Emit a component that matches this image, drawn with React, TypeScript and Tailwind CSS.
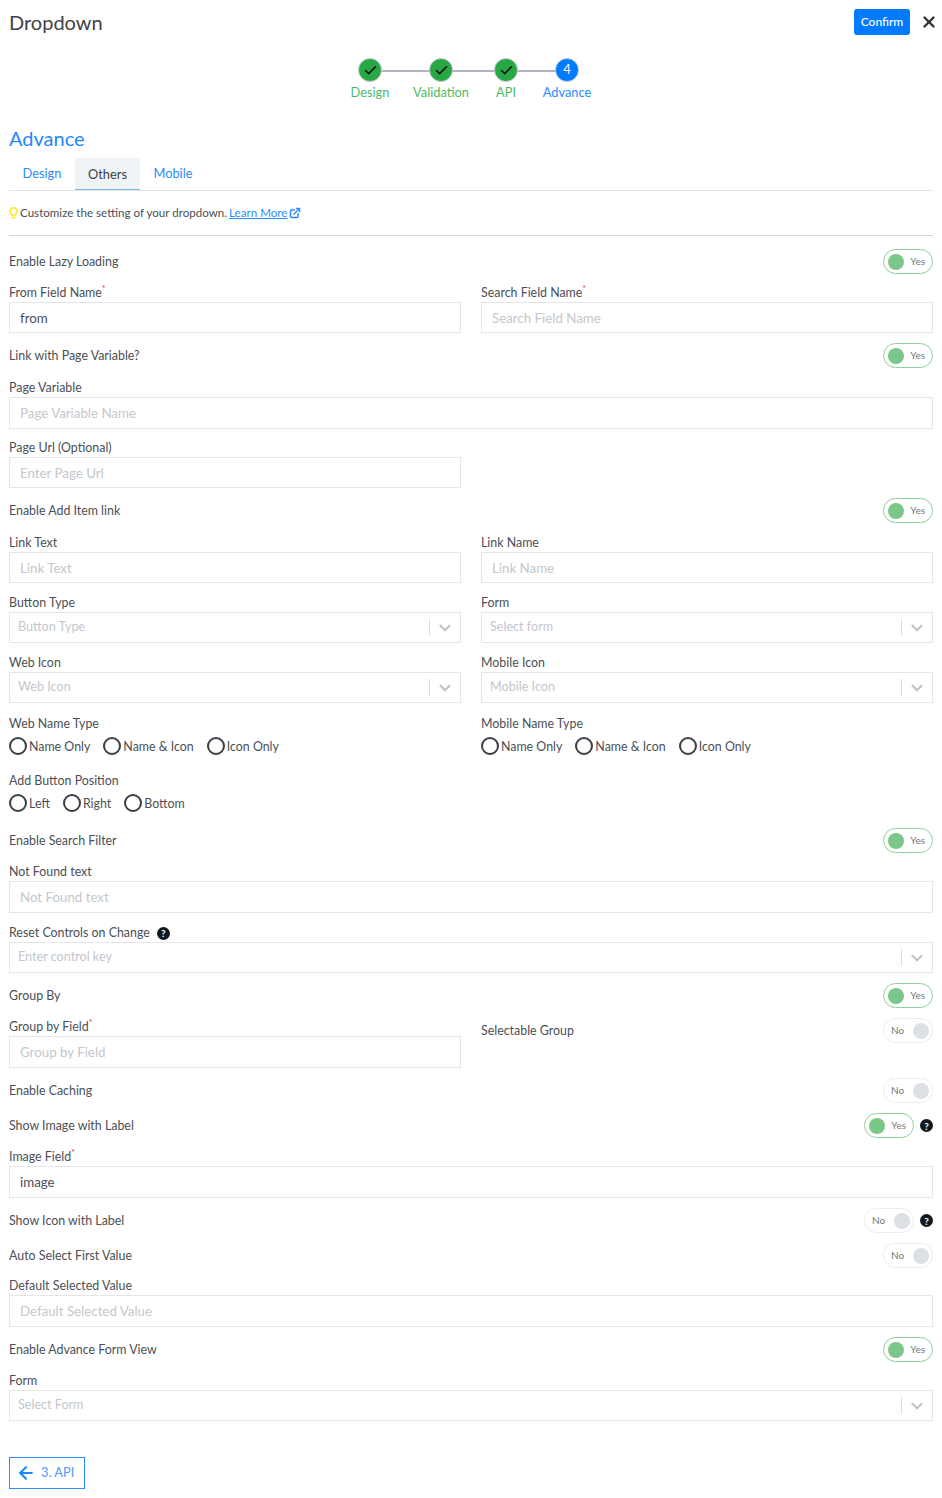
import React from 'react';
import { ArrowLeft, Check, ChevronDown, ExternalLink, X } from 'lucide-react';

const Help = () => (
  <span className="flex h-[13px] w-[13px] items-center justify-center rounded-full bg-[#101820] text-[10px] font-bold leading-none text-white">
    ?
  </span>
);

const Bulb = () => (
  <svg viewBox="0 0 12 16" className="h-[12px] w-[9px] text-[#f7e81d]" fill="none" stroke="currentColor">
    <path d="M6 1a4.7 4.7 0 0 0-2.7 8.5c.6.5.9 1 .9 1.7h3.6c0-.7.3-1.2.9-1.7A4.7 4.7 0 0 0 6 1z" strokeWidth="1.9" />
    <path d="M4 14.2h4" strokeWidth="2.4" />
  </svg>
);

const Toggle = ({ on = false }: { on?: boolean }) =>
  on ? (
    <div className="flex h-[25px] w-[50px] items-center justify-between rounded-full border border-[#8fd09c] bg-white pl-[4px] pr-[7px]">
      <span className="h-[16px] w-[16px] rounded-full bg-[#7bc787]" />
      <span className="text-[10px] text-[#777]">Yes</span>
    </div>
  ) : (
    <div className="flex h-[25px] w-[50px] items-center justify-between rounded-full border border-[#ececec] bg-white pl-[7px] pr-[3px]">
      <span className="text-[10px] text-[#777]">No</span>
      <span className="h-[16px] w-[16px] rounded-full bg-[#dcdfe4]" />
    </div>
  );

const ToggleRow = ({
  label,
  on,
  help,
  className = '',
}: {
  label: string;
  on?: boolean;
  help?: boolean;
  className?: string;
}) => (
  <div className={`flex h-[25px] items-center justify-between ${className}`}>
    <span className="mt-[2px] text-[12.4px] text-[#4b4f56]">{label}</span>
    <div className="flex items-center gap-[6px]">
      <Toggle on={on} />
      {help && <Help />}
    </div>
  </div>
);

const Label = ({ text, required }: { text: string; required?: boolean }) => (
  <div className="flex h-[18px] items-center pt-[1px] text-[12.4px] text-[#4b4f56]">
    {text}
    {required && <span className="relative -top-[5px] text-[9px] leading-none text-[#e53935]">*</span>}
  </div>
);

const TextField = ({
  label,
  placeholder,
  value,
  required,
  className = '',
  inputClass = 'h-[32px]',
}: {
  label: string;
  placeholder?: string;
  value?: string;
  required?: boolean;
  className?: string;
  inputClass?: string;
}) => (
  <div className={className}>
    <Label text={label} required={required} />
    <input
      readOnly
      value={value ?? ''}
      placeholder={placeholder}
      className={`block w-full border border-[#e6e6e6] bg-white px-[10px] text-[13.3px] text-[#4b4f56] outline-none placeholder:text-[#c4c7cc] ${inputClass}`}
    />
  </div>
);

const SelectBox = ({ placeholder }: { placeholder: string }) => (
  <div className="flex h-[31px] items-center border border-[#e6e6e6] bg-white pl-[8px] text-[12.6px] text-[#c4c7cc]">
    <span className="flex-1">{placeholder}</span>
    <span className="h-[17px] w-px bg-[#dedede]" />
    <span className="flex w-[30px] justify-center">
      <ChevronDown className="h-[18px] w-[18px] text-[#c4c4c4]" strokeWidth={3} />
    </span>
  </div>
);

const SelectField = ({
  label,
  placeholder,
  help,
  className = '',
}: {
  label: string;
  placeholder: string;
  help?: boolean;
  className?: string;
}) => (
  <div className={className}>
    <div className="flex h-[19px] items-center gap-[7px] pt-[1px] text-[12.4px] text-[#4b4f56]">
      {label}
      {help && <Help />}
    </div>
    <SelectBox placeholder={placeholder} />
  </div>
);

const Radios = ({ items }: { items: string[] }) => (
  <div className="mt-[3px] flex h-[20px] items-center gap-[13px]">
    {items.map((item) => (
      <label key={item} className="flex items-center gap-[2px] text-[12.4px] text-[#4b4f56]">
        <span className="h-[18px] w-[18px] rounded-full border-2 border-[#3a3f47]" />
        <span className="mt-[2px]">{item}</span>
      </label>
    ))}
  </div>
);

const steps = [
  { name: 'Design', width: 'w-[64px]', line: 'w-[71px]', done: true },
  { name: 'Validation', width: 'w-[78px]', line: 'w-[65px]', done: true },
  { name: 'API', width: 'w-[52px]', line: 'w-[61px]', done: true },
  { name: 'Advance', width: 'w-[70px] mr-[2px]', line: '', done: false },
];

const Stepper = () => (
  <div className="mt-[14px] flex justify-center">
    {steps.map((s) => (
      <div key={s.name} className={`relative flex flex-col items-center ${s.width}`}>
        {s.line && <span className={`absolute left-1/2 top-[12px] h-[2px] bg-[#b0b3c0] ${s.line}`} />}
        <span
          className={`relative z-10 flex h-[24px] w-[24px] items-center justify-center rounded-full border border-[#c9ccd4] text-[13px] text-white ${
            s.done ? 'bg-[#28a745]' : 'bg-[#007bff]'
          }`}
        >
          {s.done ? <Check className="h-[15px] w-[15px] text-[#111]" strokeWidth={2.5} /> : '4'}
        </span>
        <span className={`mt-[1px] text-[12.8px] leading-[18px] ${s.done ? 'text-[#4cbb66]' : 'text-[#2b8cff]'}`}>
          {s.name}
        </span>
      </div>
    ))}
  </div>
);

export default function App() {
  return (
    <div className="min-h-[1498px] bg-white px-[9px] pb-[9px] font-['Lato',sans-serif] text-[#4b4f56]">
      <header className="flex h-[44px] items-center justify-between">
        <h1 className="text-[20px] text-[#3f4246]">Dropdown</h1>
        <div className="flex items-center gap-[10px]">
          <button className="h-[26px] w-[56px] rounded-[3px] bg-[#007bff] text-[12px] font-medium text-white">
            Confirm
          </button>
          <X className="-mr-[5px] h-[18px] w-[18px] text-[#333]" strokeWidth={3.2} />
        </div>
      </header>

      <Stepper />

      <h2 className="mt-[23px] h-[29px] text-[20px] leading-[29px] text-[#1f87ff]">Advance</h2>

      <nav className="mt-[5px] flex h-[33px] border-b border-[#e3e3e3] text-[12.8px] text-[#2b8cff]">
        <span className="flex w-[66px] items-center justify-center">Design</span>
        <span className="flex w-[65px] items-center justify-center border-b border-[#7ab5f8] bg-[#f1f4f7] pt-[2px] text-[#3a3f47]">
          Others
        </span>
        <span className="flex w-[66px] items-center justify-center">Mobile</span>
      </nav>

      <div className="flex h-[45px] items-center gap-[2px] border-b border-[#d4d4d4] text-[11.6px]">
        <Bulb />
        <span>Customize the setting of your dropdown.</span>
        <a className="flex items-center gap-[2px] text-[#2b8cff]">
          <span className="underline">Learn More</span>
          <ExternalLink className="h-[12px] w-[12px]" strokeWidth={3} />
        </a>
      </div>

      <ToggleRow label="Enable Lazy Loading" on className="mt-[13px]" />

      <div className="mt-[10px] grid grid-cols-2 gap-x-[20px]">
        <TextField label="From Field Name" value="from" required inputClass="h-[31px]" />
        <TextField label="Search Field Name" placeholder="Search Field Name" required inputClass="h-[31px]" />
      </div>

      <ToggleRow label="Link with Page Variable?" on className="mt-[10px]" />
      <TextField label="Page Variable" placeholder="Page Variable Name" className="mt-[11px]" />

      <div className="mt-[10px] grid grid-cols-2 gap-x-[20px]">
        <TextField label="Page Url (Optional)" placeholder="Enter Page Url" inputClass="h-[31px]" />
      </div>

      <ToggleRow label="Enable Add Item link" on className="mt-[10px]" />

      <div className="mt-[11px] grid grid-cols-2 gap-x-[20px]">
        <TextField label="Link Text" placeholder="Link Text" inputClass="h-[31px]" />
        <TextField label="Link Name" placeholder="Link Name" inputClass="h-[31px]" />
      </div>

      <div className="mt-[10px] grid grid-cols-2 gap-x-[20px]">
        <SelectField label="Button Type" placeholder="Button Type" />
        <SelectField label="Form" placeholder="Select form" />
      </div>

      <div className="mt-[10px] grid grid-cols-2 gap-x-[20px]">
        <SelectField label="Web Icon" placeholder="Web Icon" />
        <SelectField label="Mobile Icon" placeholder="Mobile Icon" />
      </div>

      <div className="mt-[12px] grid grid-cols-2 gap-x-[20px]">
        <div>
          <Label text="Web Name Type" />
          <Radios items={['Name Only', 'Name & Icon', 'Icon Only']} />
        </div>
        <div>
          <Label text="Mobile Name Type" />
          <Radios items={['Name Only', 'Name & Icon', 'Icon Only']} />
        </div>
      </div>

      <div className="mt-[16px]">
        <Label text="Add Button Position" />
        <Radios items={['Left', 'Right', 'Bottom']} />
      </div>

      <ToggleRow label="Enable Search Filter" on className="mt-[15px]" />
      <TextField label="Not Found text" placeholder="Not Found text" className="mt-[10px]" />
      <SelectField label="Reset Controls on Change" placeholder="Enter control key" help className="mt-[10px]" />
      <ToggleRow label="Group By" on className="mt-[10px]" />

      <div className="mt-[10px] grid grid-cols-2 gap-x-[20px]">
        <TextField label="Group by Field" placeholder="Group by Field" required />
        <ToggleRow label="Selectable Group" />
      </div>

      <ToggleRow label="Enable Caching" className="mt-[10px]" />
      <ToggleRow label="Show Image with Label" on help className="mt-[10px]" />
      <TextField label="Image Field" value="image" required className="mt-[10px]" />
      <ToggleRow label="Show Icon with Label" help className="mt-[10px]" />
      <ToggleRow label="Auto Select First Value" className="mt-[10px]" />
      <TextField label="Default Selected Value" placeholder="Default Selected Value" className="mt-[9px]" />
      <ToggleRow label="Enable Advance Form View" on className="mt-[10px]" />
      <SelectField label="Form" placeholder="Select Form" className="mt-[9px]" />

      <button className="mt-[36px] flex h-[32px] w-[76px] items-center gap-[5px] border border-[#2b8cff] pl-[6px] text-[12.8px] text-[#4f97f5]">
        <ArrowLeft className="h-[20px] w-[20px] text-[#1f87ff]" strokeWidth={2.5} />
        3. API
      </button>
    </div>
  );
}
